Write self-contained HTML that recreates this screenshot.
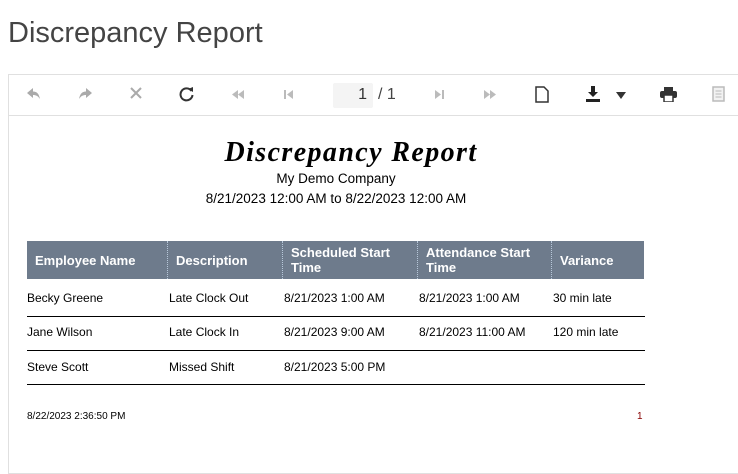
<!DOCTYPE html>
<html><head><meta charset="utf-8"><style>
*{margin:0;padding:0;box-sizing:border-box}
body{width:738px;height:462px;overflow:hidden;background:#fff;font-family:"Liberation Sans",sans-serif;position:relative}
.h1{position:absolute;left:8px;top:17px;font-size:29px;color:#444;font-weight:400}
.frame{position:absolute;left:8px;top:74px;width:740px;height:400px;border:1px solid #e0e0e0}
.tb{position:absolute;left:8px;top:74px;width:740px;height:42px;border:1px solid #e0e0e0;background:#fff}
.ic{position:absolute;top:87px}
.pg{position:absolute;left:333px;top:83px;width:40px;height:25px;background:#f4f4f4;border-radius:2px;font-size:16px;color:#333;text-align:right;padding:3px 6px 0 0}
.pg2{position:absolute;left:378px;top:86px;font-size:16px;color:#444}
.t{position:absolute;font-size:12px;color:#000;white-space:nowrap}
.title{position:absolute;left:0;width:702px;text-align:center;top:137px;font-family:"Liberation Serif",serif;font-weight:bold;font-style:italic;font-size:28px;letter-spacing:1.4px}
.c{position:absolute;left:0;width:672px;text-align:center;font-size:13.5px}
.hd{position:absolute;top:241px;height:38px;background:#6e7b8c;color:#fff;font-size:13px;font-weight:bold;padding:0 8px;display:flex;align-items:center;line-height:15px;border-right:1px dotted #b8c8da}
.ln{position:absolute;left:27px;width:618px;height:1px;background:#000}
</style></head><body>
<div class="h1">Discrepancy Report</div>
<div class="frame"></div>
<div class="tb"></div>
<svg class="ic" style="left:26px" width="16" height="14" viewBox="0 0 16 14"><path d="M7 1 L1 6 L7 11 V8 C10 8 12 9 14 12 C13 7 11 4.5 7 4.5Z" fill="#aaa"/></svg>
<svg class="ic" style="left:77px" width="16" height="14" viewBox="0 0 16 14"><path d="M9 1 L15 6 L9 11 V8 C6 8 4 9 2 12 C3 7 5 4.5 9 4.5Z" fill="#aaa"/></svg>
<svg class="ic" style="left:130px" width="12" height="12" viewBox="0 0 12 12"><path d="M1 1 L11 11 M11 1 L1 11" stroke="#aaa" stroke-width="2"/></svg>
<svg class="ic" style="left:179px;top:86px" width="16" height="16" viewBox="0 0 16 16"><path d="M12.5 5 A6 6 0 1 0 13.5 9" fill="none" stroke="#333" stroke-width="2"/><path d="M9 3 L14 1 L14 6Z" fill="#333"/></svg>
<svg class="ic" style="left:232px;top:90px" width="12" height="9" viewBox="0 0 12 9"><path d="M6 0 L0 4.5 L6 9Z M12 0 L6 4.5 L12 9Z" fill="#bbb"/></svg>
<svg class="ic" style="left:284px;top:90px" width="10" height="9" viewBox="0 0 10 9"><rect x="0" y="0" width="2" height="9" fill="#bbb"/><path d="M9 0 L3 4.5 L9 9Z" fill="#bbb"/></svg>
<div class="pg">1</div><div class="pg2">/ 1</div>
<svg class="ic" style="left:434px;top:90px" width="10" height="9" viewBox="0 0 10 9"><rect x="8" y="0" width="2" height="9" fill="#bbb"/><path d="M1 0 L7 4.5 L1 9Z" fill="#bbb"/></svg>
<svg class="ic" style="left:484px;top:90px" width="12" height="9" viewBox="0 0 12 9"><path d="M0 0 L6 4.5 L0 9Z M6 0 L12 4.5 L6 9Z" fill="#bbb"/></svg>
<svg class="ic" style="left:535px;top:86px" width="14" height="17" viewBox="0 0 14 17"><path d="M1 1 H9 L13 5 V16 H1Z" fill="#fff" stroke="#333" stroke-width="1.5"/></svg>
<svg class="ic" style="left:585px;top:86px" width="16" height="16" viewBox="0 0 16 16"><path d="M6 0 H10 V6 H13 L8 11 L3 6 H6Z" fill="#222"/><rect x="1" y="13" width="14" height="3" fill="#222"/></svg>
<svg class="ic" style="left:616px;top:92px" width="10" height="7" viewBox="0 0 10 7"><path d="M0 0 H10 L5 7Z" fill="#333"/></svg>
<svg class="ic" style="left:660px;top:87px" width="17" height="15" viewBox="0 0 17 15"><rect x="4" y="0" width="9" height="4" fill="#333"/><rect x="0" y="4" width="17" height="7" rx="2" fill="#333"/><rect x="4" y="8" width="9" height="7" fill="#fff" stroke="#333" stroke-width="1.5"/></svg>
<svg class="ic" style="left:712px;top:86px" width="13" height="16" viewBox="0 0 13 16"><rect x="1" y="1" width="11" height="14" fill="#f2f2f2" stroke="#bbb" stroke-width="1.5"/><path d="M3.5 5 H9.5 M3.5 8 H9.5 M3.5 11 H9.5" stroke="#bbb"/></svg>

<div class="title">Discrepancy Report</div>
<div class="c" style="top:171px">My Demo Company</div>
<div class="c" style="top:191px">8/21/2023 12:00 AM to 8/22/2023 12:00 AM</div>

<div class="hd" style="left:27px;width:141px">Employee Name</div>
<div class="hd" style="left:168px;width:115px">Description</div>
<div class="hd" style="left:283px;width:135px">Scheduled Start<br>Time</div>
<div class="hd" style="left:418px;width:134px">Attendance Start<br>Time</div>
<div class="hd" style="left:552px;width:92px;border-right:none">Variance</div>

<div class="t" style="left:27px;top:291px">Becky Greene</div>
<div class="t" style="left:169px;top:291px">Late Clock Out</div>
<div class="t" style="left:284px;top:291px">8/21/2023 1:00 AM</div>
<div class="t" style="left:419px;top:291px">8/21/2023 1:00 AM</div>
<div class="t" style="left:553px;top:291px">30 min late</div>
<div class="ln" style="top:316px"></div>
<div class="t" style="left:27px;top:325px">Jane Wilson</div>
<div class="t" style="left:169px;top:325px">Late Clock In</div>
<div class="t" style="left:284px;top:325px">8/21/2023 9:00 AM</div>
<div class="t" style="left:419px;top:325px">8/21/2023 11:00 AM</div>
<div class="t" style="left:553px;top:325px">120 min late</div>
<div class="ln" style="top:350px"></div>
<div class="t" style="left:27px;top:360px">Steve Scott</div>
<div class="t" style="left:169px;top:360px">Missed Shift</div>
<div class="t" style="left:284px;top:360px">8/21/2023 5:00 PM</div>
<div class="ln" style="top:384px"></div>
<div class="t" style="left:27px;top:411px;font-size:10px">8/22/2023 2:36:50 PM</div>
<div class="t" style="left:637px;top:411px;font-size:10px;color:#800">1</div>
</body></html>
